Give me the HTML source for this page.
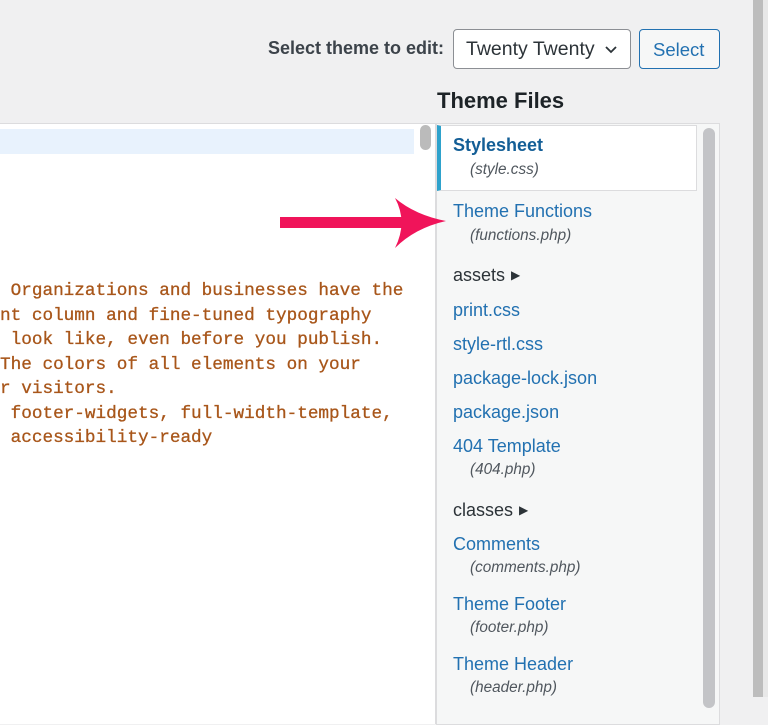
<!DOCTYPE html>
<html><head><style>
body{margin:0;width:768px;height:697px;background:#f0f0f1;position:relative;overflow:hidden;font-family:"Liberation Sans",sans-serif}
.abs{position:absolute}
.code{font-family:"Liberation Mono",monospace;font-size:17.7px;color:#a8561a;white-space:pre;line-height:24.5px;-webkit-text-stroke:0.3px #a8561a}
.lk{position:absolute;left:453px;color:#2271b1;font-size:18px}
.sub{position:absolute;left:470px;color:#50575e;font-size:15.3px;font-style:italic}
.dir{position:absolute;left:453px;color:#2c3338;font-size:18px}
.tri{font-size:12px;vertical-align:2px;margin-left:6px}
</style></head><body>
<div class="abs" style="left:268px;top:38px;font-size:18px;font-weight:bold;color:#3c434a">Select theme to edit:</div>
<div class="abs" style="left:453px;top:29px;width:176px;height:38px;border:1px solid #8c8f94;border-radius:4px;background:#fff"></div>
<div class="abs" style="left:466px;top:38px;font-size:19.5px;color:#2c3338">Twenty Twenty</div>
<svg class="abs" style="left:604px;top:45px" width="14" height="10"><path d="M2 2 L7 7 L12 2" stroke="#2c3338" stroke-width="1.8" fill="none"/></svg>
<div class="abs" style="left:639px;top:29px;width:79px;height:38px;border:1px solid #2271b1;border-radius:4px;background:#f6f7f7"></div>
<div class="abs" style="left:653px;top:39px;font-size:18.5px;color:#2271b1">Select</div>
<div class="abs" style="left:437px;top:88px;font-size:22px;font-weight:bold;color:#1d2327">Theme Files</div>

<div class="abs" style="left:0;top:123px;width:435px;height:600px;background:#fff;border-top:1px solid #dcdcde;border-right:1px solid #dcdcde"></div>
<div class="abs" style="left:0;top:129px;width:414px;height:25px;background:#e8f2fd"></div>
<div class="abs" style="left:420px;top:125px;width:11px;height:25px;border-radius:6px;background:#bbb"></div>
<div class="abs code" style="left:0;top:279px"> Organizations and businesses have the
nt column and fine-tuned typography
 look like, even before you publish.
The colors of all elements on your
r visitors.
 footer-widgets, full-width-template,
 accessibility-ready</div>

<div class="abs" style="left:436px;top:123px;width:282px;height:600px;background:#f6f7f7;border:1px solid #dcdcde"></div>
<div class="abs" style="left:437px;top:125px;width:255px;height:64px;background:#fff;border:1px solid #dcdcde;border-left:4px solid #2ea2cc"></div>
<div class="abs" style="left:703px;top:128px;width:12px;height:580px;border-radius:6px;background:#c3c4c7"></div>
<div class="abs" style="left:753px;top:0;width:10px;height:697px;background:#bdbdbd"></div>
<div class="abs" style="left:763px;top:0;width:5px;height:697px;background:#e8e8e8"></div>

<div class="lk" style="top:135px;font-weight:bold;color:#135e96">Stylesheet</div>
<div class="sub" style="top:161px">(style.css)</div>
<div class="lk" style="top:201px">Theme Functions</div>
<div class="sub" style="top:227px">(functions.php)</div>
<div class="dir" style="top:265px">assets<span class="tri">&#9654;&#xFE0E;</span></div>
<div class="lk" style="top:300px">print.css</div>
<div class="lk" style="top:334px">style-rtl.css</div>
<div class="lk" style="top:368px">package-lock.json</div>
<div class="lk" style="top:402px">package.json</div>
<div class="lk" style="top:436px">404 Template</div>
<div class="sub" style="top:461px">(404.php)</div>
<div class="dir" style="top:500px">classes<span class="tri">&#9654;&#xFE0E;</span></div>
<div class="lk" style="top:534px">Comments</div>
<div class="sub" style="top:559px">(comments.php)</div>
<div class="lk" style="top:594px">Theme Footer</div>
<div class="sub" style="top:619px">(footer.php)</div>
<div class="lk" style="top:654px">Theme Header</div>
<div class="sub" style="top:679px">(header.php)</div>

<svg class="abs" style="left:270px;top:190px" width="190" height="70"><path d="M10 27 L135 27 L135 38 L10 38 Z" fill="#f0145a"/><path d="M125 8 Q145 25 176 31 Q145 38 125 58 Q138 32 125 8 Z" fill="#f0145a"/></svg>
</body></html>
